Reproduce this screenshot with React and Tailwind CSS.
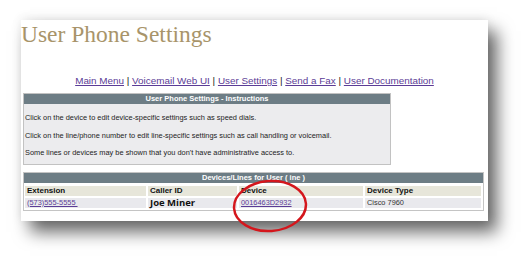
export default function App() {
  const link = "text-[#5b3c96] underline";
  return (
    <div className="w-[530px] h-[263px] bg-white relative overflow-hidden">
      <div className="ml-[21px] mt-[20px] w-[467px] h-[201px] bg-white shadow-[9px_11px_16px_rgba(0,0,0,0.6),0_-2px_10px_rgba(0,0,0,0.08)] flex flex-col font-['Liberation_Sans',Arial,sans-serif]">
        <div className="pt-[2px] text-[23.5px] leading-[24px] text-[#a8946a] font-['Liberation_Serif','Times_New_Roman',serif] whitespace-nowrap">
          User Phone Settings
        </div>
        <div className="mt-[29px] text-[9.9px] leading-[12px] text-center text-[#222] whitespace-nowrap">
          <span className={link}>Main Menu</span> | <span className={link}>Voicemail Web UI</span> |{" "}
          <span className={link}>User Settings</span> | <span className={link}>Send a Fax</span> |{" "}
          <span className={link}>User Documentation</span>
        </div>
        <div className="mt-[6px] ml-[2px] w-[368px] h-[72px] border border-[#c2c2c2] bg-[#ececee] flex flex-col">
          <div className="h-[10px] bg-[#6d7d85] text-white font-bold text-[7.5px] leading-[10px] text-center whitespace-nowrap">
            User Phone Settings - Instructions
          </div>
          <div className="pt-[5px] pl-[1px] text-[7.4px] leading-[17.5px] text-[#222] whitespace-nowrap">
            <div>Click on the device to edit device-specific settings such as speed dials.</div>
            <div>Click on the line/phone number to edit line-specific settings such as call handling or voicemail.</div>
            <div>Some lines or devices may be shown that you don't have administrative access to.</div>
          </div>
        </div>
        <div className="mt-[7px] ml-[2px] w-[461px] border border-[#c4c4c4] bg-white flex flex-col">
          <div className="h-[10px] bg-[#6d7d85] text-white font-bold text-[7.5px] leading-[10px] text-center whitespace-nowrap">
            Devices/Lines for User ( ine )
          </div>
          <div className="grid grid-cols-[121px_89px_124px_116px] gap-x-[2px] gap-y-[1.5px] px-[1px] pt-[3px] pb-[2px]">
            <div className="h-[10px] bg-[#e7e6da] pl-[2px] text-[8px] leading-[10px] font-bold text-[#111]">Extension</div>
            <div className="h-[10px] bg-[#e7e6da] pl-[2px] text-[8px] leading-[10px] font-bold text-[#111]">Caller ID</div>
            <div className="h-[10px] bg-[#e7e6da] pl-[2px] text-[8px] leading-[10px] font-bold text-[#111]">Device</div>
            <div className="h-[10px] bg-[#e7e6da] pl-[2px] text-[8px] leading-[10px] font-bold text-[#111]">Device Type</div>
            <div className="h-[10px] bg-[#e9e9ed] pl-[2px] text-[7.4px] leading-[10px]"><span className={link}>(573)555-5555&nbsp;</span></div>
            <div className="h-[10px] bg-[#e9e9ed] pl-[2px] text-[9.5px] leading-[10px] font-bold text-[#111] font-['Open_Sans',sans-serif]">Joe Miner</div>
            <div className="h-[10px] bg-[#e9e9ed] pl-[2px] text-[7.4px] leading-[10px]"><span className={link}>0016463D2932</span></div>
            <div className="h-[10px] bg-[#e9e9ed] pl-[2px] text-[7.4px] leading-[10px] text-[#333]">Cisco 7960</div>
          </div>
        </div>
      </div>
      <svg className="absolute left-0 top-0" width="530" height="263" viewBox="0 0 530 263">
        <ellipse cx="270" cy="206" rx="36" ry="25" fill="none" stroke="#d4161c" strokeWidth="2.5" transform="rotate(-4 270 206)" />
      </svg>
    </div>
  );
}
